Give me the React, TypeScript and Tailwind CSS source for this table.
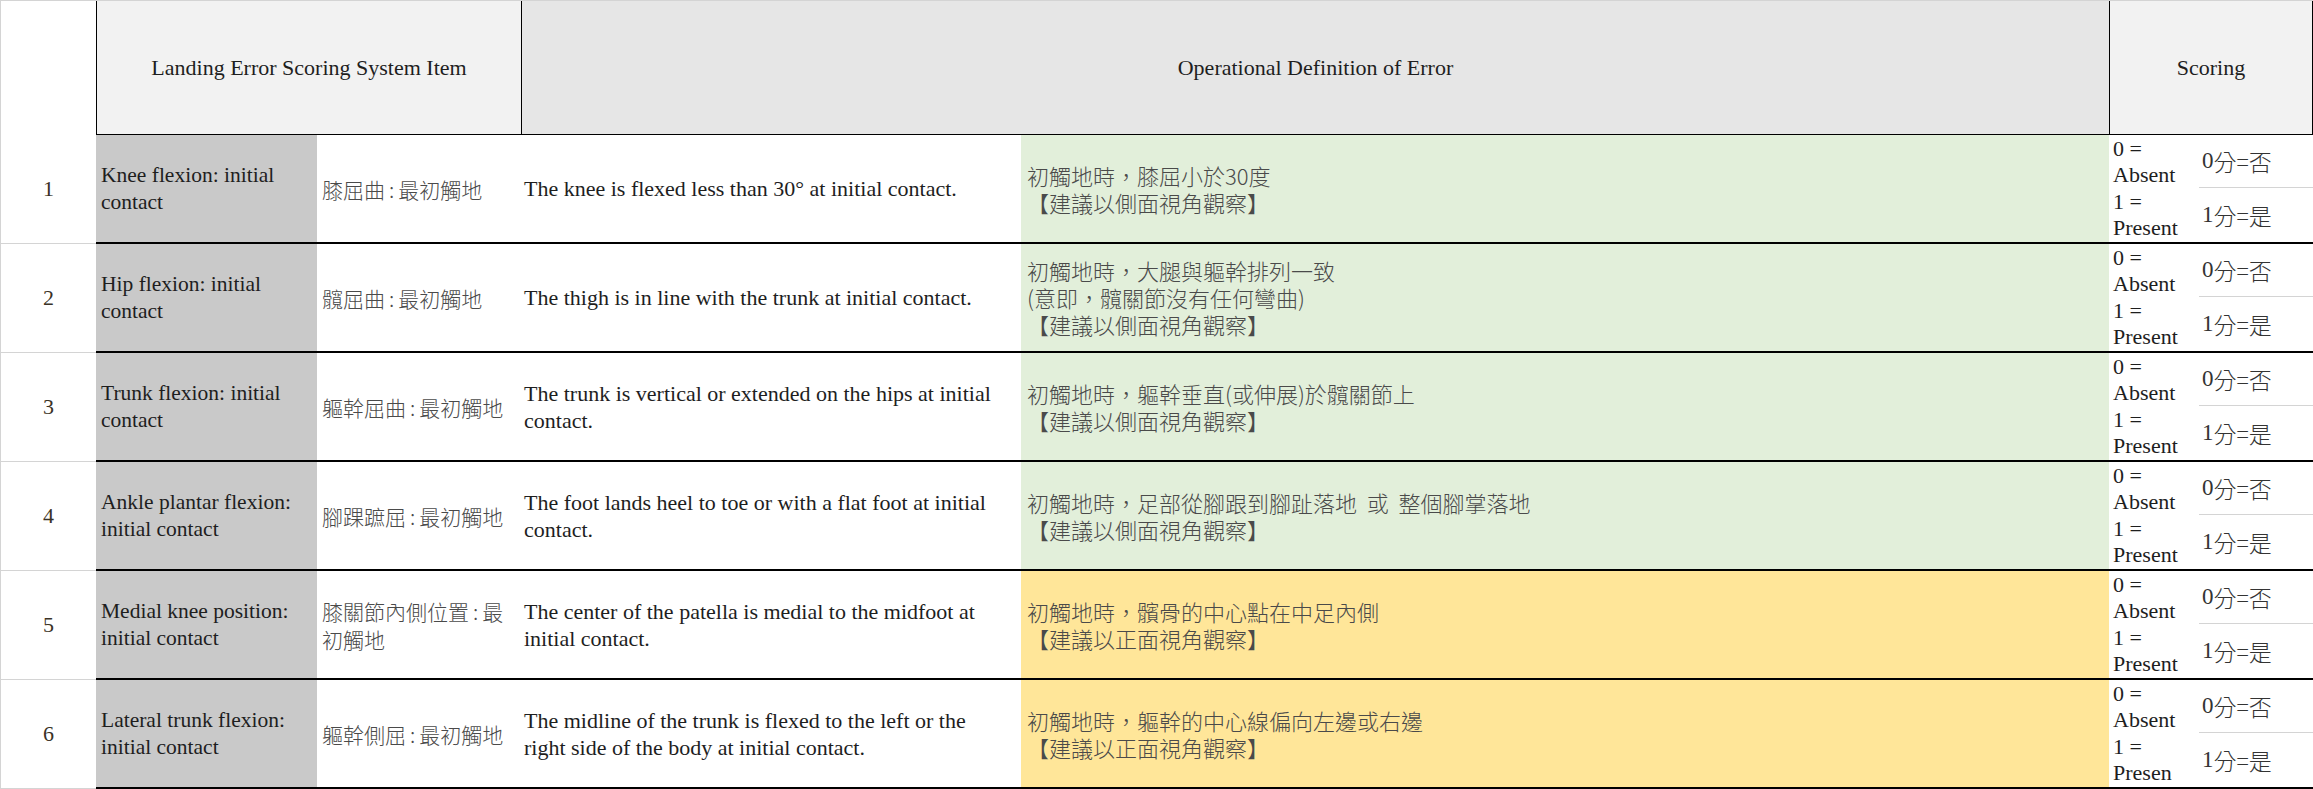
const serif = "font-['Liberation_Serif','Noto_Sans_CJK_TC',serif]";
const cjk = "font-['Noto_Sans_CJK_TC','Liberation_Sans',sans-serif]";

type Item = {
  id: number;
  en: string[];
  zh: [string, string, string?];
  desc: string[];
  def: string[];
  tone: "green" | "yellow";
  lastPresent?: string;
};

const items: Item[] = [
  {
    id: 1,
    en: ["Knee flexion: initial", "contact"],
    zh: ["膝屈曲", "最初觸地"],
    desc: ["The knee is flexed less than 30° at initial contact."],
    def: ["初觸地時，膝屈小於30度", "【建議以側面視角觀察】"],
    tone: "green",
  },
  {
    id: 2,
    en: ["Hip flexion: initial", "contact"],
    zh: ["髖屈曲", "最初觸地"],
    desc: ["The thigh is in line with the trunk at initial contact."],
    def: ["初觸地時，大腿與軀幹排列一致", "(意即，髖關節沒有任何彎曲)", "【建議以側面視角觀察】"],
    tone: "green",
  },
  {
    id: 3,
    en: ["Trunk flexion: initial", "contact"],
    zh: ["軀幹屈曲", "最初觸地"],
    desc: ["The trunk is vertical or extended on the hips at initial", "contact."],
    def: ["初觸地時，軀幹垂直(或伸展)於髖關節上", "【建議以側面視角觀察】"],
    tone: "green",
  },
  {
    id: 4,
    en: ["Ankle plantar flexion:", "initial contact"],
    zh: ["腳踝蹠屈", "最初觸地"],
    desc: ["The foot lands heel to toe or with a flat foot at initial", "contact."],
    def: ["初觸地時，足部從腳跟到腳趾落地  或  整個腳掌落地", "【建議以側面視角觀察】"],
    tone: "green",
  },
  {
    id: 5,
    en: ["Medial knee position:", "initial contact"],
    zh: ["膝關節內側位置", "最", "初觸地"],
    desc: ["The center of the patella is medial to the midfoot at", "initial contact."],
    def: ["初觸地時，髕骨的中心點在中足內側", "【建議以正面視角觀察】"],
    tone: "yellow",
  },
  {
    id: 6,
    en: ["Lateral trunk flexion:", "initial contact"],
    zh: ["軀幹側屈", "最初觸地"],
    desc: ["The midline of the trunk is flexed to the left or the", "right side of the body at initial contact."],
    def: ["初觸地時，軀幹的中心線偏向左邊或右邊", "【建議以正面視角觀察】"],
    tone: "yellow",
    lastPresent: "Presen",
  },
];

function Lines({ lines }: { lines: string[] }) {
  return (
    <>
      {lines.map((l, i) => (
        <div key={i} className="whitespace-pre">
          {l}
        </div>
      ))}
    </>
  );
}

function Scoring({ present }: { present: string }) {
  return (
    <div className="flex w-[204px] bg-white">
      <div className={`flex w-[90px] flex-col pl-[4px] text-[22px] leading-[26px] text-[#1e1e1e] ${serif}`}>
        <div className="h-[53px] pt-[1px]">
          <div>0 =</div>
          <div>Absent</div>
        </div>
        <div className="pt-[1px]">
          <div>1 =</div>
          <div className="overflow-hidden whitespace-nowrap">{present}</div>
        </div>
      </div>
      <div className="flex flex-1 flex-col">
        <div className="flex h-[53px] items-center border-b border-[#d4d4d4] pl-[3px] text-[23px] text-[#333]">
          <span className={serif}>0</span>
          <span className={`${cjk} font-light`}>分=否</span>
        </div>
        <div className="flex flex-1 items-center pl-[3px] text-[23px] text-[#333]">
          <span className={serif}>1</span>
          <span className={`${cjk} font-light`}>分=是</span>
        </div>
      </div>
    </div>
  );
}

function Row({ item }: { item: Item }) {
  const [head, tail, rest] = item.zh;
  return (
    <div className="flex h-[109px]">
      <div
        className={`flex w-[96px] items-center justify-center border-b border-l border-[#d4d4d4] bg-white pb-[2px] text-[22px] text-[#3a3226] ${serif}`}
      >
        {item.id}
      </div>
      <div className="flex flex-1 border-b-2 border-black">
        <div className={`flex w-[221px] flex-col justify-center bg-[#c9c9c9] pl-[5px] text-[21.5px] leading-[27px] text-[#1e1e1e] ${serif}`}>
          <Lines lines={item.en} />
        </div>
        <div className={`flex w-[204px] flex-col justify-center bg-white pl-[5px] text-[21px] leading-[28px] font-light text-[#4a4a4a] ${cjk}`}>
          <div className="whitespace-nowrap">
            {head}
            <span className="px-[4px]">:</span>
            {tail}
          </div>
          {rest && <div>{rest}</div>}
        </div>
        <div className={`flex w-[500px] flex-col justify-center bg-white pl-[3px] text-[22px] leading-[27px] text-[#1e1e1e] ${serif}`}>
          <Lines lines={item.desc} />
        </div>
        <div
          className={`flex w-[1088px] flex-col justify-center pl-[6px] text-[22px] leading-[27px] font-light text-[#4a4a4a] ${cjk} ${
            item.tone === "green" ? "bg-[#e2efda]" : "bg-[#ffe699]"
          }`}
        >
          <Lines lines={item.def} />
        </div>
        <Scoring present={item.lastPresent ?? "Present"} />
      </div>
    </div>
  );
}

export default function App() {
  return (
    <div className="h-[789px] w-[2313px] overflow-hidden bg-white">
      <div className="flex h-[135px] border-t border-[#d4d4d4]">
        <div className="w-[96px] border-l border-[#d4d4d4] bg-white" />
        <div className={`flex flex-1 border-b border-black text-[22px] text-[#1e1e1e] ${serif}`}>
          <div className="flex w-[425px] items-center justify-center border-l border-black bg-[#f2f2f2] pb-[1px]">
            Landing Error Scoring System Item
          </div>
          <div className="flex w-[1588px] items-center justify-center border-l border-black bg-[#e6e6e6] pb-[1px]">
            Operational Definition of Error
          </div>
          <div className="flex w-[204px] items-center justify-center border-x border-black bg-[#f2f2f2] pb-[1px]">
            Scoring
          </div>
        </div>
      </div>
      {items.map((item) => (
        <Row key={item.id} item={item} />
      ))}
    </div>
  );
}
